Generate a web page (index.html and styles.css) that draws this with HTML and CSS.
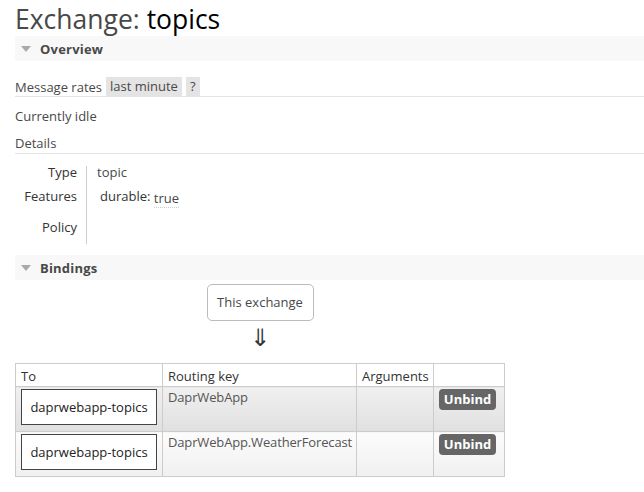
FILE: index.html
```html
<!DOCTYPE html>
<html>
<head>
<meta charset="utf-8">
<link rel="stylesheet" href="styles.css">
</head>
<body>
<h1 class="title">Exchange: <b>topics</b></h1>

<div class="section-head"><span class="tri"></span><span class="sh-label">Overview</span></div>
<div class="rates-row">
  <span class="rates-label">Message rates</span>
  <span class="chip">last minute</span>
  <span class="chip">?</span>
</div>
<div class="idle">Currently idle</div>
<div class="details-head">Details</div>
<div class="facts">
  <div class="fact-labels">
    <div class="fl fl-type">Type</div>
    <div class="fl fl-feat">Features</div>
    <div class="fl fl-pol">Policy</div>
  </div>
  <div class="fact-values">
    <div class="fv fv-type">topic</div>
    <div class="fv fv-feat"><span class="dk">durable:</span> <span class="dv">true</span></div>
    <div class="fv fv-pol"></div>
  </div>
</div>

<div class="section-head"><span class="tri"></span><span class="sh-label">Bindings</span></div>
<div class="bindings">
  <div class="this-ex">This exchange</div>
  <div class="arrow">⇓</div>
  <table class="btable">
    <thead>
      <tr><th class="c1">To</th><th class="c2">Routing key</th><th class="c3">Arguments</th><th class="c4"></th></tr>
    </thead>
    <tbody>
      <tr class="r1">
        <td><div class="qbox">daprwebapp-topics</div></td>
        <td class="rk">DaprWebApp</td>
        <td></td>
        <td><span class="btn">Unbind</span></td>
      </tr>
      <tr class="r2">
        <td><div class="qbox">daprwebapp-topics</div></td>
        <td class="rk">DaprWebApp.WeatherForecast</td>
        <td></td>
        <td><span class="btn">Unbind</span></td>
      </tr>
    </tbody>
  </table>
</div>
</body>
</html>
```

FILE: styles.css
```css
html, body { margin: 0; padding: 0; }
body {
  font-family: "Open Sans", "DejaVu Sans", sans-serif;
  font-size: 13px;
  color: #484848;
  padding-left: 15px;
  background: #fff;
}
.title {
  margin: 0;
  height: 36px;
  padding-top: 4px;
  box-sizing: border-box;
  font-size: 26.5px;
  font-weight: normal;
  line-height: 30px;
  color: #484848;
}
.title b { font-weight: normal; color: #000; }
.section-head {
  height: 25px;
  background: #f8f8f8;
  display: flex;
  align-items: center;
}
.tri {
  width: 0; height: 0;
  margin-left: 6px;
  margin-right: 9px;
  border-left: 5px solid transparent;
  border-right: 5px solid transparent;
  border-top: 6px solid #aaa;
}
.sh-label { font-weight: bold; font-size: 13px; color: #484848; letter-spacing: 0.2px; }
.rates-row {
  margin-top: 16px;
  height: 19px;
  border-bottom: 1px solid #e4e4e4;
  display: flex;
  align-items: center;
  gap: 4px;
}
.chip {
  background: #e4e4e4;
  height: 19px;
  line-height: 19px;
  padding: 0 4px;
}
.idle { height: 20px; line-height: 20px; margin-top: 9px; }
.details-head {
  margin-top: 7px;
  height: 20px; line-height: 20px;
  border-bottom: 1px solid #e4e4e4;
}
.facts {
  display: flex;
  margin-top: 12px;
}
.fact-labels {
  width: 62px;
  text-align: right;
  color: #333;
  padding-right: 9px;
}
.fact-values {
  border-left: 1px solid #ccc;
  padding-left: 10px;
  height: 78px;
  color: #484848;
}
.fl, .fv { line-height: 18px; }
.fl-type, .fv-type { height: 24px; margin-top: -3px; }
.fl-feat, .fv-feat { height: 31px; }
.dk { color: #333; }
.dv { border-bottom: 1px dotted #ccc; position: relative; top: 2px; }
.fv-feat { padding-left: 3px; }
.facts + .section-head { margin-top: 11px; }
.bindings { width: 490px; padding-top: 4px; }
.this-ex {
  width: 107px;
  height: 37px;
  box-sizing: border-box;
  margin: 0 auto;
  border: 1px solid #bbb;
  border-radius: 5px;
  text-align: center;
  line-height: 35px;
  color: #484848;
}
.arrow {
  text-align: center;
  font-family: "DejaVu Sans", sans-serif;
  font-size: 24px;
  line-height: 24px;
  height: 24px;
  margin-top: 5px;
  color: #333;
}
.btable {
  margin-top: 13px;
  width: 490px;
  border-collapse: collapse;
  table-layout: fixed;
}
.btable th, .btable td {
  border: 1px solid #ccc;
  text-align: left;
  vertical-align: top;
  padding: 2px 5px;
}
.btable th { font-weight: normal; color: #333; height: 19px; padding-top: 3px; padding-bottom: 0; }
.c1 { width: 136px; }
.c2 { width: 183px; }
.c3 { width: 66px; }
.btable td { height: 40px; }
.r1 td { background: linear-gradient(#f0f0f0, #e0e0e0); }
.r2 td { background: linear-gradient(#fcfcfc, #f0f0f0); }
.qbox {
  width: 136px;
  height: 36px;
  box-sizing: border-box;
  border: 1px solid #444;
  background: #fff;
  text-align: center;
  line-height: 34px;
  color: #222;
}
.btable td.rk { color: #555; padding-top: 1px; letter-spacing: -0.15px; }
.btn {
  display: block;
  width: 57px;
  height: 21px;
  line-height: 21px;
  box-sizing: border-box;
  background: #666;
  color: #fff;
  font-weight: bold;
  text-align: center;
  border-radius: 4px;
}
```
